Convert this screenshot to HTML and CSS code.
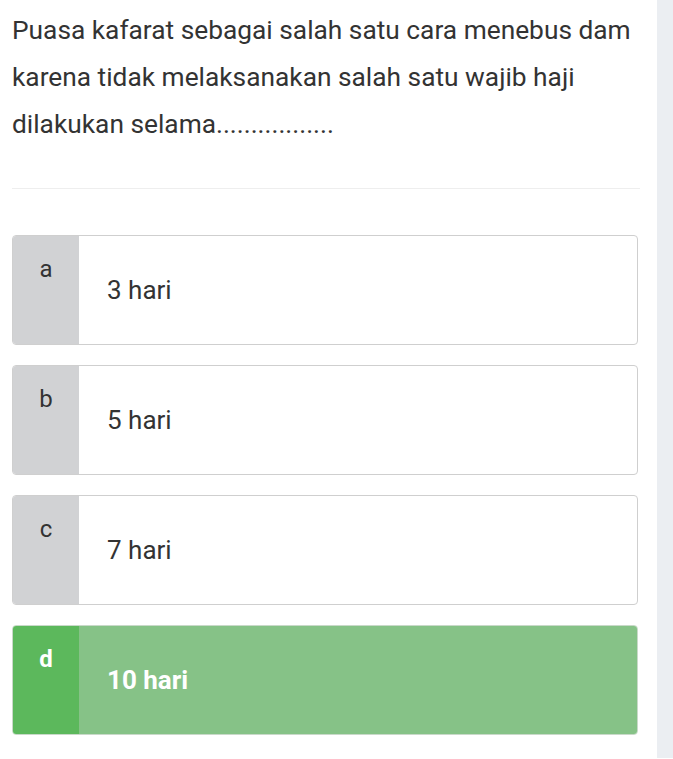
FILE: index.html
```html
<!DOCTYPE html>
<html>
<head>
<meta charset="utf-8">
<link rel="stylesheet" href="styles.css">
</head>
<body>
<div class="page">
  <main class="main">
    <p class="question">Puasa kafarat sebagai salah satu cara menebus dam karena tidak melaksanakan salah satu wajib haji dilakukan selama.................</p>
    <hr class="sep">
    <div class="options">
      <div class="opt"><div class="key">a</div><div class="val">3 hari</div></div>
      <div class="opt"><div class="key">b</div><div class="val">5 hari</div></div>
      <div class="opt"><div class="key">c</div><div class="val">7 hari</div></div>
      <div class="opt correct"><div class="key">d</div><div class="val">10 hari</div></div>
    </div>
  </main>
  <aside class="side"></aside>
</div>
</body>
</html>
```
FILE: styles.css
```css
html, body { margin: 0; padding: 0; background: #fff; }
body { font-family: Roboto, "Noto Sans", sans-serif; color: #333; }
.page { display: flex; width: 673px; height: 759px; }
.main { width: 657px; box-sizing: border-box; padding-left: 12px; }
.side { width: 16px; height: 758px; background: #ebeef2; }
.question { margin: 7px 0 0 0; font-size: 26.3px; line-height: 47px; width: 636px; color: #333; }
.sep { border: 0; border-top: 1px solid #eeeeee; margin: 40px 0 0 0; width: 628px; }
.options { display: flex; flex-direction: column; gap: 20px; margin-top: 46px; }
.opt { display: flex; width: 626px; height: 110px; box-sizing: border-box; border: 1px solid #cfcfcf; border-radius: 4px; overflow: hidden; }
.key { width: 66px; background: #d1d2d4; text-align: center; font-size: 24px; line-height: 33px; padding-top: 17px; box-sizing: border-box; color: #333; }
.val { flex: 1; display: flex; align-items: center; padding-left: 28px; font-size: 26px; color: #333; }
.correct { border-color: #c9d9c9; }
.correct .key { background: #5cb85c; color: #fff; font-weight: bold; }
.correct .val { background: #86c287; color: #fff; font-weight: bold; }
```
